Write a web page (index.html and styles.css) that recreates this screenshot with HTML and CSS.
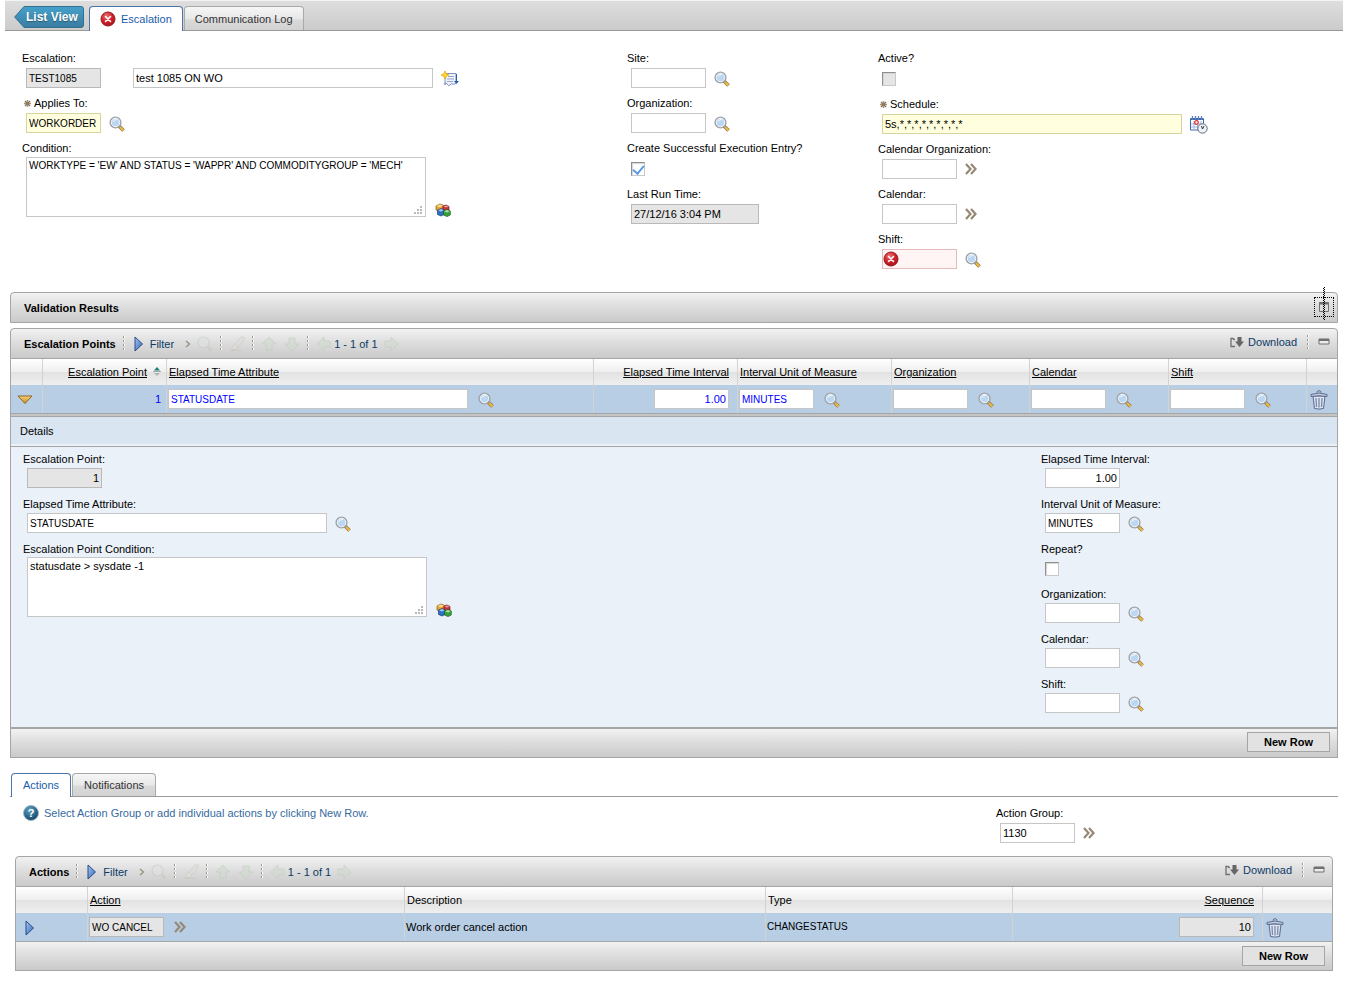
FILE: index.html
```html
<!DOCTYPE html>
<html lang="en">
<head>
    <meta charset="UTF-8">
    <meta name="viewport" content="width=device-width, initial-scale=1.0">
    <title>Escalation</title>
    <link rel="stylesheet" href="styles.css">
</head>
<body>

    <!-- shared icons -->
    <svg class="sprite" aria-hidden="true">
        <defs>
            <linearGradient id="gBlue" x1="0" y1="0" x2="1" y2="1">
                <stop offset="0" stop-color="#a9c8f2"/>
                <stop offset="1" stop-color="#2f62b5"/>
            </linearGradient>
            <linearGradient id="gGold" x1="0" y1="0" x2="0" y2="1">
                <stop offset="0" stop-color="#f6d27c"/>
                <stop offset="1" stop-color="#c8891c"/>
            </linearGradient>
            <radialGradient id="gRed" cx="0.4" cy="0.3" r="0.7">
                <stop offset="0" stop-color="#ee7474"/>
                <stop offset="0.6" stop-color="#cc2027"/>
                <stop offset="1" stop-color="#a8141b"/>
            </radialGradient>
            <radialGradient id="gHelp" cx="0.4" cy="0.3" r="0.7">
                <stop offset="0" stop-color="#5fa3c6"/>
                <stop offset="1" stop-color="#12456a"/>
            </radialGradient>
            <linearGradient id="gBack" x1="0" y1="0" x2="0" y2="1">
                <stop offset="0" stop-color="#45a2cb"/>
                <stop offset="1" stop-color="#3a7ba0"/>
            </linearGradient>
        </defs>
        <symbol id="lens" viewBox="0 0 16 16">
            <path d="M10 10l4.500 4.500" stroke="#8a7a5a" stroke-width="3.600"/>
            <path d="M11 11l3.500 3.500" stroke="#f0b93c" stroke-width="2.200"/>
            <circle cx="6.500" cy="6.500" r="5.400" fill="#bcd7f2" stroke="#a0a2a5" stroke-width="1.400"/>
            <circle cx="6.500" cy="6.500" r="4.200" fill="none" stroke="#eef3f8" stroke-width="1"/>
            <path d="M4 5.500q1-2.200 3.500-2" stroke="#fff" fill="none"/>
        </symbol>
        <symbol id="lens-off" viewBox="0 0 16 16">
            <path d="M10.500 10.500l4 4" stroke="#c9c7bb" stroke-width="2.500"/>
            <circle cx="6.500" cy="6.500" r="5.500" fill="#dfe2e2" stroke="#c6cac8" stroke-width="1.200"/>
        </symbol>
        <symbol id="eraser" viewBox="0 0 16 16">
            <path d="M1 14.500h12" stroke="#c4c4bf"/>
            <path d="M3 11l3-3 3 3-3 2.500H3z" fill="#e6dfd5" stroke="#c9c4bc"/>
            <path d="M6 8l6-7h3v3l-6 7z" fill="#deddd7" stroke="#cac9c3"/>
        </symbol>
        <symbol id="arrow" viewBox="0 0 16 16">
            <path d="M8 1l7 7h-4v6H5V8H1z" fill="#cedbcd" stroke="#c0cbc0"/>
        </symbol>
        <symbol id="error" viewBox="0 0 16 16">
            <circle cx="8" cy="8" r="7" fill="url(#gRed)" stroke="#9c1a1e"/>
            <path d="M5.500 5.500l5 5m0-5l-5 5" stroke="#fff" stroke-width="1.600" stroke-linecap="round"/>
        </symbol>
        <symbol id="chevrons" viewBox="0 0 12 12">
            <path d="M1 1l4.500 5L1 11M6 1l4.500 5L6 11" fill="none" stroke="#968877" stroke-width="2.200"/>
        </symbol>
        <symbol id="play" viewBox="0 0 10 16">
            <path d="M1 1l7.500 7L1 15z" fill="url(#gBlue)" stroke="#27498a"/>
        </symbol>
        <symbol id="dots" viewBox="0 0 2 15">
            <path d="M0 0h2v2H0zM0 4h2v2H0zM0 8h2v2H0zM0 12h2v2H0z" fill="#fff"/>
            <path d="M0 0h1v2H0zM0 4h1v2H0zM0 8h1v2H0zM0 12h1v2H0z" fill="#99988c"/>
        </symbol>
        <symbol id="cubes" viewBox="0 0 16 14">
            <path d="M1 3l4-2 3 1v5L5 8.500 1 7z" fill="#e5a32f" stroke="#8f5f14" stroke-width="0.700"/>
            <path d="M1.500 3.200L5 1.500l3 1-3 1.700z" fill="#ffdf8c"/>
            <path d="M8 3l3-1 3 1.500V8H8z" fill="#c9333c" stroke="#7c1c22" stroke-width="0.700"/>
            <path d="M8.500 3.400l2.500-1 2.500 1.100-2.500 1z" fill="#f09a9f"/>
            <path d="M2.500 7l3.500-1.500L9 7v4.500L6 13l-3.500-1.500z" fill="#2f6fc4" stroke="#173f7c" stroke-width="0.700"/>
            <path d="M3 7.200l3-1.300 2.600 1.300L6 8.500z" fill="#a6cbf5"/>
            <path d="M8.500 8l3.500-1.500L15.300 8v4L12 13.600 8.500 12z" fill="#35a03c" stroke="#1b641f" stroke-width="0.700"/>
            <path d="M9 8.200l3-1.300 2.800 1.300L12 9.600z" fill="#a9e3a6"/>
        </symbol>
        <symbol id="trash" viewBox="0 0 18 20">
            <path d="M3 6h12l-1.500 12.500q-4.500 1.200-9 0z" fill="#dbe4f0" stroke="#5c6a8c"/>
            <path d="M6 8l.5 9M9 8v9.500M12 8l-.5 9" stroke="#7d8bab" stroke-width="1.300"/>
            <path d="M1 4.500Q9 1.500 17 4.500v2q-8-1.500-16 0z" fill="#c5d1e3" stroke="#5c6a8c"/>
            <path d="M7 2.700q0-2 2-2t2 2" fill="none" stroke="#5c6a8c"/>
        </symbol>
        <symbol id="download" viewBox="0 0 14 12">
            <path d="M5 3.500H4L3 2.500H1v8h4" fill="none" stroke="#6f6f6f" stroke-width="1.300"/>
            <path d="M7.500 1h4v4.500H14L9.500 11 5 5.500h2.500z" fill="#666"/>
        </symbol>
        <symbol id="min" viewBox="0 0 12 8">
            <path d="M1 1h10v5H1z" fill="#ececec" stroke="#707070"/>
            <path d="M1 2h10" stroke="#707070" stroke-width="2"/>
        </symbol>
        <symbol id="max" viewBox="0 0 12 12">
            <path d="M1.500 1.500h9v9h-9z" fill="#ddd" stroke="#707070"/>
            <path d="M1 2.500h10" stroke="#707070" stroke-width="2"/>
        </symbol>
        <symbol id="grip" viewBox="0 0 8 8">
            <path d="M6 0h2v2H6zM3 3h2v2H3zM6 3h2v2H6zM0 6h2v2H0zM3 6h2v2H3zM6 6h2v2H6z" fill="#b9b9b9"/>
        </symbol>
        <symbol id="star" viewBox="0 0 7 7">
            <path d="M3.500 0v7M0 3.500h7" stroke="#b98d4a" stroke-width="1.400"/>
            <path d="M1 1l5 5M6 1L1 6" stroke="#7d7872" stroke-width="1.400"/>
        </symbol>
    </svg>

    <nav class="top-bar">
        <button class="back">
            <svg width="70" height="22" viewBox="0 0 70 22"><path d="M.7 11L10 .5h57q2.500 0 2.500 2.500v16q0 2.500-2.500 2.500H10z" fill="url(#gBack)" stroke="#35708f"/></svg>
            <span>List View</span>
        </button>
        <a href="#" class="tab active"><svg width="16" height="16"><use href="#error"/></svg>Escalation</a>
        <a href="#" class="tab">Communication Log</a>
    </nav>

    <form class="main-form">
        <div class="col">
            <div class="field">
                <label for="escalation">Escalation:</label>
                <div class="row">
                    <input type="text" id="escalation" class="readonly caps" value="TEST1085" readonly>
                    <input type="text" class="wide desc" aria-label="Escalation description" value="test 1085 ON WO">
                    <button type="button" class="icon" aria-label="Long description">
                        <svg width="18" height="16" viewBox="0 0 18 16">
                            <path d="M4 2.500h11V12q-1 2-3 1t-3 1-3-1-2 1z" fill="#eef2fb" stroke="#8191c0"/>
                            <path d="M7 5.500h6M6 8h7M6 10.500h6" stroke="#98a5cc"/>
                            <path d="M15.500 3v9" stroke="#2a5cab"/>
                            <path d="M13 10h5l-2.500 3z" fill="#2a5cab"/>
                            <path d="M4 0l1.300 2.700L8 4 5.300 5.300 4 8 2.700 5.300 0 4l2.700-1.300z" fill="#ffd62e" stroke="#e0a300" stroke-width="0.700"/>
                        </svg>
                    </button>
                </div>
            </div>
            <div class="field">
                <label for="applies"><svg class="star" width="7" height="7"><use href="#star"/></svg>Applies To:</label>
                <div class="row">
                    <input type="text" id="applies" class="required caps" value="WORKORDER">
                    <button type="button" class="icon" aria-label="Select value"><svg width="16" height="16"><use href="#lens"/></svg></button>
                </div>
            </div>
            <div class="field area-field">
                <label for="condition">Condition:</label>
                <div class="row">
                    <div class="area">
                        <textarea id="condition" class="caps">WORKTYPE = 'EW' AND STATUS = 'WAPPR' AND COMMODITYGROUP = 'MECH'</textarea>
                        <svg class="grip" width="8" height="8"><use href="#grip"/></svg>
                    </div>
                    <button type="button" class="icon" aria-label="Expression builder"><svg width="16" height="14"><use href="#cubes"/></svg></button>
                </div>
            </div>
        </div>

        <div class="col">
            <div class="field">
                <label for="site">Site:</label>
                <div class="row">
                    <input type="text" id="site">
                    <button type="button" class="icon" aria-label="Select value"><svg width="16" height="16"><use href="#lens"/></svg></button>
                </div>
            </div>
            <div class="field">
                <label for="org">Organization:</label>
                <div class="row">
                    <input type="text" id="org">
                    <button type="button" class="icon" aria-label="Select value"><svg width="16" height="16"><use href="#lens"/></svg></button>
                </div>
            </div>
            <div class="field check-field">
                <label for="entry">Create Successful Execution Entry?</label>
                <div class="row"><input type="checkbox" id="entry" checked></div>
            </div>
            <div class="field">
                <label for="lastrun">Last Run Time:</label>
                <div class="row"><input type="text" id="lastrun" class="readonly date" value="27/12/16 3:04 PM" readonly></div>
            </div>
        </div>

        <div class="col">
            <div class="field check-field">
                <label for="active">Active?</label>
                <div class="row"><input type="checkbox" id="active" disabled></div>
            </div>
            <div class="field">
                <label for="schedule"><svg class="star" width="7" height="7"><use href="#star"/></svg>Schedule:</label>
                <div class="row">
                    <input type="text" id="schedule" class="wide required" value="5s,*,*,*,*,*,*,*,*,*">
                    <button type="button" class="icon" aria-label="Set schedule">
                        <svg width="18" height="18" viewBox="0 0 18 18">
                            <path d="M.5 3h13v11H.5z" fill="#fff" stroke="#3f66a8"/>
                            <path d="M.5 3h13" stroke="#3f66a8" stroke-width="2"/>
                            <path d="M2.500 0v4M5.500 0v4M8.500 0v4M11.500 0v4" stroke="#5b82c4" stroke-width="1.300"/>
                            <path d="M4 5v9M7.500 5v9M11 5v9M1 8h13M1 11h13" stroke="#9db5dc"/>
                            <circle cx="6.500" cy="6.500" r="1.800" fill="#fff" stroke="#d33" stroke-width="1.300"/>
                            <circle cx="12.500" cy="12.500" r="4.700" fill="#eef3f9" stroke="#5e6b7d"/>
                            <path d="M12.500 13l-1-3M12.500 13l1.500-3" stroke="#333" fill="none"/>
                        </svg>
                    </button>
                </div>
            </div>
            <div class="field">
                <label for="calorg">Calendar Organization:</label>
                <div class="row">
                    <input type="text" id="calorg">
                    <button type="button" class="icon go" aria-label="Detail menu"><svg width="12" height="12"><use href="#chevrons"/></svg></button>
                </div>
            </div>
            <div class="field">
                <label for="cal">Calendar:</label>
                <div class="row">
                    <input type="text" id="cal">
                    <button type="button" class="icon go" aria-label="Detail menu"><svg width="12" height="12"><use href="#chevrons"/></svg></button>
                </div>
            </div>
            <div class="field">
                <label for="shift">Shift:</label>
                <div class="row">
                    <div class="error-box">
                        <input type="text" id="shift" class="invalid">
                        <svg width="16" height="16"><use href="#error"/></svg>
                    </div>
                    <button type="button" class="icon" aria-label="Select value"><svg width="16" height="16"><use href="#lens"/></svg></button>
                </div>
            </div>
        </div>
    </form>

    <section class="panel">
        <header class="toolbar">
            <h2>Validation Results</h2>
            <button class="toggle focused" aria-label="Maximize"><svg width="12" height="12"><use href="#max"/></svg></button>
        </header>
    </section>

    <section class="panel">
        <header class="toolbar">
            <h2>Escalation Points</h2>
            <div class="tools">
                <svg class="dots" width="2" height="15"><use href="#dots"/></svg>
                <button class="filter"><svg width="10" height="16"><use href="#play"/></svg>Filter</button>
                <svg class="next" width="6" height="8" viewBox="0 0 6 8"><path d="M1 1l3.500 3L1 7" fill="none" stroke="#99907f" stroke-width="1.300"/></svg>
                <svg class="off" width="16" height="16"><use href="#lens-off"/></svg>
                <svg class="dots" width="2" height="15"><use href="#dots"/></svg>
                <svg class="off" width="16" height="16"><use href="#eraser"/></svg>
                <svg class="dots" width="2" height="15"><use href="#dots"/></svg>
                <svg class="off" width="16" height="16"><use href="#arrow"/></svg>
                <svg class="off down" width="16" height="16"><use href="#arrow"/></svg>
                <svg class="dots" width="2" height="15"><use href="#dots"/></svg>
                <svg class="off left" width="16" height="16"><use href="#arrow"/></svg>
                <span class="count">1 - 1 of 1</span>
                <svg class="off right" width="16" height="16"><use href="#arrow"/></svg>
            </div>
            <div class="tools-right">
                <a href="#"><svg width="14" height="12"><use href="#download"/></svg>Download</a>
                <svg class="dots" width="2" height="15"><use href="#dots"/></svg>
                <button class="toggle" aria-label="Minimize"><svg width="12" height="8"><use href="#min"/></svg></button>
            </div>
        </header>

        <table class="points">
            <colgroup>
                <col class="c-toggle"><col class="c-point"><col><col class="c-interval"><col class="c-unit"><col class="c-org"><col class="c-cal"><col class="c-shift"><col class="c-trash">
            </colgroup>
            <thead>
                <tr>
                    <th></th>
                    <th class="num"><a href="#">Escalation Point</a><svg class="sort" width="8" height="9" viewBox="0 0 8 9"><path d="M1 3.500L4 0l3 3.500z" fill="#177f78"/><path d="M0 4.500h8" stroke="#a9a9a9"/><path d="M1 6l3 3 3-3z" fill="#b5b5b5"/></svg></th>
                    <th><a href="#">Elapsed Time Attribute</a></th>
                    <th class="num"><a href="#">Elapsed Time Interval</a></th>
                    <th><a href="#">Interval Unit of Measure</a></th>
                    <th><a href="#">Organization</a></th>
                    <th><a href="#">Calendar</a></th>
                    <th><a href="#">Shift</a></th>
                    <th></th>
                </tr>
            </thead>
            <tbody>
                <tr>
                    <td><button class="expand" aria-label="Close details"><svg width="16" height="10" viewBox="0 0 16 10"><path d="M1 1h14L8 8.500z" fill="url(#gGold)" stroke="#8f671c"/></svg></button></td>
                    <td class="num changed point">1</td>
                    <td><div class="row"><input type="text" class="wide changed caps" aria-label="Elapsed Time Attribute" value="STATUSDATE"><button class="icon" aria-label="Select value"><svg width="16" height="16"><use href="#lens"/></svg></button></div></td>
                    <td class="num"><div class="row"><input type="text" class="num changed" aria-label="Elapsed Time Interval" value="1.00"></div></td>
                    <td><div class="row"><input type="text" class="changed caps" aria-label="Interval Unit of Measure" value="MINUTES"><button class="icon" aria-label="Select value"><svg width="16" height="16"><use href="#lens"/></svg></button></div></td>
                    <td><div class="row"><input type="text" aria-label="Organization"><button class="icon" aria-label="Select value"><svg width="16" height="16"><use href="#lens"/></svg></button></div></td>
                    <td><div class="row"><input type="text" aria-label="Calendar"><button class="icon" aria-label="Select value"><svg width="16" height="16"><use href="#lens"/></svg></button></div></td>
                    <td><div class="row"><input type="text" aria-label="Shift"><button class="icon" aria-label="Select value"><svg width="16" height="16"><use href="#lens"/></svg></button></div></td>
                    <td><button class="trash" aria-label="Mark row for delete"><svg width="18" height="20"><use href="#trash"/></svg></button></td>
                </tr>
            </tbody>
        </table>

        <div class="details">
            <h3>Details</h3>
            <form class="details-form">
                <div class="col">
                    <div class="field">
                        <label for="d-point">Escalation Point:</label>
                        <div class="row"><input type="text" id="d-point" class="readonly num" value="1" readonly></div>
                    </div>
                    <div class="field">
                        <label for="d-attr">Elapsed Time Attribute:</label>
                        <div class="row">
                            <input type="text" id="d-attr" class="wide caps" value="STATUSDATE">
                            <button type="button" class="icon" aria-label="Select value"><svg width="16" height="16"><use href="#lens"/></svg></button>
                        </div>
                    </div>
                    <div class="field area-field">
                        <label for="d-cond">Escalation Point Condition:</label>
                        <div class="row">
                            <div class="area">
                                <textarea id="d-cond">statusdate &gt; sysdate -1</textarea>
                                <svg class="grip" width="8" height="8"><use href="#grip"/></svg>
                            </div>
                            <button type="button" class="icon" aria-label="Expression builder"><svg width="16" height="14"><use href="#cubes"/></svg></button>
                        </div>
                    </div>
                </div>
                <div class="col">
                    <div class="field">
                        <label for="d-int">Elapsed Time Interval:</label>
                        <div class="row"><input type="text" id="d-int" class="num" value="1.00"></div>
                    </div>
                    <div class="field">
                        <label for="d-unit">Interval Unit of Measure:</label>
                        <div class="row">
                            <input type="text" id="d-unit" class="caps" value="MINUTES">
                            <button type="button" class="icon" aria-label="Select value"><svg width="16" height="16"><use href="#lens"/></svg></button>
                        </div>
                    </div>
                    <div class="field">
                        <label for="d-repeat">Repeat?</label>
                        <div class="row"><input type="checkbox" id="d-repeat"></div>
                    </div>
                    <div class="field">
                        <label for="d-org">Organization:</label>
                        <div class="row">
                            <input type="text" id="d-org">
                            <button type="button" class="icon" aria-label="Select value"><svg width="16" height="16"><use href="#lens"/></svg></button>
                        </div>
                    </div>
                    <div class="field">
                        <label for="d-cal">Calendar:</label>
                        <div class="row">
                            <input type="text" id="d-cal">
                            <button type="button" class="icon" aria-label="Select value"><svg width="16" height="16"><use href="#lens"/></svg></button>
                        </div>
                    </div>
                    <div class="field">
                        <label for="d-shift">Shift:</label>
                        <div class="row">
                            <input type="text" id="d-shift">
                            <button type="button" class="icon" aria-label="Select value"><svg width="16" height="16"><use href="#lens"/></svg></button>
                        </div>
                    </div>
                </div>
            </form>
        </div>
        <footer><button class="new-row">New Row</button></footer>
    </section>

    <nav class="sub-tabs">
        <a href="#" class="tab active">Actions</a>
        <a href="#" class="tab">Notifications</a>
    </nav>

    <div class="hint-row">
        <p class="hint">
            <svg width="16" height="16" viewBox="0 0 16 16"><circle cx="8" cy="8" r="7.500" fill="url(#gHelp)" stroke="#9db9c8"/><text x="8" y="12" text-anchor="middle">?</text></svg>
            Select Action Group or add individual actions by clicking New Row.
        </p>
        <div class="field">
            <label for="group">Action Group:</label>
            <div class="row">
                <input type="text" id="group" value="1130">
                <button type="button" class="icon go" aria-label="Detail menu"><svg width="12" height="12"><use href="#chevrons"/></svg></button>
            </div>
        </div>
    </div>

    <section class="panel inner">
        <header class="toolbar">
            <h2>Actions</h2>
            <div class="tools">
                <svg class="dots" width="2" height="15"><use href="#dots"/></svg>
                <button class="filter"><svg width="10" height="16"><use href="#play"/></svg>Filter</button>
                <svg class="next" width="6" height="8" viewBox="0 0 6 8"><path d="M1 1l3.500 3L1 7" fill="none" stroke="#99907f" stroke-width="1.300"/></svg>
                <svg class="off" width="16" height="16"><use href="#lens-off"/></svg>
                <svg class="dots" width="2" height="15"><use href="#dots"/></svg>
                <svg class="off" width="16" height="16"><use href="#eraser"/></svg>
                <svg class="dots" width="2" height="15"><use href="#dots"/></svg>
                <svg class="off" width="16" height="16"><use href="#arrow"/></svg>
                <svg class="off down" width="16" height="16"><use href="#arrow"/></svg>
                <svg class="dots" width="2" height="15"><use href="#dots"/></svg>
                <svg class="off left" width="16" height="16"><use href="#arrow"/></svg>
                <span class="count">1 - 1 of 1</span>
                <svg class="off right" width="16" height="16"><use href="#arrow"/></svg>
            </div>
            <div class="tools-right">
                <a href="#"><svg width="14" height="12"><use href="#download"/></svg>Download</a>
                <svg class="dots" width="2" height="15"><use href="#dots"/></svg>
                <button class="toggle" aria-label="Minimize"><svg width="12" height="8"><use href="#min"/></svg></button>
            </div>
        </header>

        <table class="actions">
            <colgroup>
                <col class="a-toggle"><col class="a-action"><col><col class="a-type"><col class="a-seq"><col class="a-trash">
            </colgroup>
            <thead>
                <tr>
                    <th></th>
                    <th><a href="#">Action</a></th>
                    <th>Description</th>
                    <th>Type</th>
                    <th class="num"><a href="#">Sequence</a></th>
                    <th></th>
                </tr>
            </thead>
            <tbody>
                <tr>
                    <td><button class="expand" aria-label="View details"><svg width="10" height="16"><use href="#play"/></svg></button></td>
                    <td><div class="row"><input type="text" class="readonly caps" aria-label="Action" value="WO CANCEL" readonly><button class="icon go" aria-label="Detail menu"><svg width="12" height="12"><use href="#chevrons"/></svg></button></div></td>
                    <td>Work order cancel action</td>
                    <td class="caps">CHANGESTATUS</td>
                    <td class="num"><div class="row"><input type="text" class="readonly num" aria-label="Sequence" value="10" readonly></div></td>
                    <td><button class="trash" aria-label="Mark row for delete"><svg width="18" height="20"><use href="#trash"/></svg></button></td>
                </tr>
            </tbody>
        </table>
        <footer><button class="new-row">New Row</button></footer>
    </section>

</body>
</html>
```
FILE: styles.css
```css
* {
    box-sizing: border-box;
}

body {
    margin: 0;
    background-color: #fff;
    color: #000;
    font-family: "Liberation Sans", Arial, sans-serif;
    font-size: 11px;
    line-height: 16px;
}

svg {
    display: block;
    flex: none;
}

button, input, textarea {
    font: inherit;
    color: inherit;
    margin: 0;
}

button {
    background: none;
    border: none;
    padding: 0;
    cursor: pointer;
}

h2, h3, p {
    margin: 0;
    font-size: 11px;
}

.sprite {
    position: absolute;
    width: 0;
    height: 0;
}

/* top bar and tabs */
.top-bar {
    display: flex;
    align-items: flex-end;
    height: 31px;
    margin: 0 5px;
    padding-left: 9px;
    border-top: 1px solid #f4f4f4;
    border-bottom: 1px solid #999;
    background: linear-gradient(#dedede, #cbcbcb);
}

.back {
    position: relative;
    align-self: flex-start;
    margin: 5px 5px 0 0;
}

.back span {
    position: absolute;
    top: 3px;
    left: 12px;
    color: #fff;
    font-size: 12px;
    font-weight: bold;
    white-space: nowrap;
    text-shadow: 0 1px 1px #2b566d;
}

.tab {
    display: flex;
    align-items: center;
    gap: 5px;
    height: 24px;
    margin-right: 1px;
    padding: 0 10px;
    border: 1px solid #a9a9a9;
    border-bottom: none;
    border-radius: 4px 4px 0 0;
    background: linear-gradient(#f6f6f6 0%, #e8e8e8 50%, #dadada 55%, #d2d2d2 100%);
    color: #333;
    text-decoration: none;
}

.tab.active {
    height: 25px;
    margin-bottom: -1px;
    padding-bottom: 1px;
    border-color: #4a74ab;
    background: #fff;
    color: #1a5dab;
}

/* fields */
.main-form {
    display: grid;
    grid-template-columns: 1fr 251px 460px;
    padding: 19px 10px 16px 22px;
}

.field {
    min-height: 45px;
}

.check-field {
    min-height: 46px;
}

label {
    display: flex;
    align-items: center;
    height: 16px;
    white-space: nowrap;
}

.star {
    margin: 0 3px 0 2px;
}

.row {
    display: flex;
    align-items: center;
}

.field .row {
    margin: 2px 0 0 4px;
}

.area-field .row {
    align-items: flex-end;
    margin-top: 1px;
}

input[type="text"], textarea {
    display: block;
    border: 1px solid #c6c6c6;
    background-color: #fff;
    padding: 0 2px;
}

input[type="text"] {
    width: 75px;
    height: 20px;
}

input[type="text"].wide {
    width: 300px;
}

input[type="text"].date {
    width: 128px;
}

input[type="text"].desc {
    margin-left: 32px;
}

input[type="text"].readonly {
    background-color: #e5e5e5;
    border-color: #b9b9b9;
}

input[type="text"].required {
    background-color: #ffffdf;
    border-color: #d6d69c;
}

input[type="text"].invalid {
    background-color: #fff5f5;
    border-color: #e6b9bd;
    padding-left: 20px;
}

input.num {
    text-align: right;
}

/* upper case codes */
.caps {
    font-size: 10px;
}

.changed {
    color: #00f;
}

.error-box {
    position: relative;
}

.error-box svg {
    position: absolute;
    top: 2px;
    left: 1px;
}

.icon {
    margin: 2px 0 0 8px;
}

.icon.go {
    margin-top: 0;
}

.area {
    position: relative;
}

textarea {
    width: 400px;
    height: 60px;
    resize: none;
}

.grip {
    position: absolute;
    right: 4px;
    bottom: 3px;
}

.area-field .icon {
    margin-left: 9px;
}

input[type="checkbox"] {
    appearance: none;
    width: 14px;
    height: 14px;
    margin: 4px 0 2px;
    border: 1px solid;
    border-color: #8e8e8e #c8c8c8 #c8c8c8 #8e8e8e;
    background: #fff;
    box-shadow: inset 1px 1px 1px #d5d5d5;
}

input[type="checkbox"]:disabled {
    background: #e5e5e5;
}

input[type="checkbox"]:checked::after {
    content: "";
    display: block;
    width: 5px;
    height: 9px;
    margin: 0 0 0 3px;
    border: solid #5b9be6;
    border-width: 0 2px 2px 0;
    transform: rotate(40deg);
}

/* panels */
.panel {
    margin: 0 10px 5px;
}

.panel.inner {
    margin: 0 15px 17px;
}

.toolbar {
    display: flex;
    align-items: center;
    height: 31px;
    padding: 0 3px 0 13px;
    border: 1px solid #a5a5a5;
    border-radius: 4px 4px 0 0;
    background: linear-gradient(#f2f2f2, #dcdcdc 50%, #cacaca);
}

.toolbar h2 {
    margin-right: 7px;
    white-space: nowrap;
}

.tools, .tools-right {
    display: flex;
    align-items: center;
    color: #0b3a66;
}

.filter {
    display: flex;
    align-items: center;
    gap: 6px;
    margin: 0 11px 0 9px;
}

.next {
    margin-right: 6px;
}

.off {
    opacity: 0.6;
    margin: 0 7px 0 0;
}

.dots + .off {
    margin-left: 7px;
}

.down {
    transform: rotate(180deg);
}

.off.left {
    transform: rotate(-90deg);
    margin-right: 2px;
}

.off.right {
    transform: rotate(90deg);
    margin-left: 5px;
}

.tools-right {
    margin: 0 4px 3px auto;
}

.tools-right a {
    display: flex;
    align-items: center;
    gap: 4px;
    margin-right: 10px;
    color: inherit;
    text-decoration: none;
}

.tools-right .toggle {
    margin-left: 9px;
}

.focused {
    position: relative;
    display: flex;
    align-items: center;
    justify-content: center;
    width: 20px;
    height: 20px;
    margin: 0 0 2px auto;
    border: 1px dotted #000;
}

/* dotted insertion line over the button */
.focused::after {
    content: "";
    position: absolute;
    top: -11px;
    left: 8px;
    width: 2px;
    height: 33px;
    background: conic-gradient(#000 25%, transparent 0 50%, #000 0 75%, transparent 0) 0 0 / 2px 2px;
}

/* tables */
table {
    width: 100%;
    table-layout: fixed;
    border-collapse: separate;
    border-spacing: 0;
    border: solid #a5a5a5;
    border-width: 0 1px;
}

.c-toggle { width: 32px; }
.c-point { width: 124px; }
.c-interval { width: 144px; }
.c-unit { width: 154px; }
.c-org { width: 138px; }
.c-cal { width: 139px; }
.c-shift { width: 138px; }
.c-trash { width: 30px; }

.a-toggle { width: 72px; }
.a-action { width: 317px; }
.a-type { width: 247px; }
.a-seq { width: 250px; }
.a-trash { width: 69px; }

th, td {
    padding: 0 1px;
    border-right: 1px solid #d3d3d3;
    text-align: left;
    white-space: nowrap;
}

th:last-child, td:last-child {
    border-right: none;
}

th {
    height: 26px;
    padding-left: 2px;
    background: linear-gradient(#fff, #efefef 48%, #e2e2e2 50%, #efefef);
    font-weight: normal;
}

th a {
    color: #000;
}

td {
    height: 28px;
    background-color: #b8cee5;
}

th.num, td.num {
    padding-right: 8px;
    text-align: right;
}

td.num.point, .points th:nth-child(2) {
    padding-right: 5px;
}

td.num .row {
    justify-content: flex-end;
}

td .icon {
    margin-left: 10px;
}

.sort {
    display: inline-block;
    margin-left: 6px;
}

.expand {
    display: block;
    margin: 2px 0 0 5px;
}

.actions .expand {
    margin-left: 8px;
}

.trash {
    display: block;
    margin: 2px 0 0 2px;
}

/* details */
.details {
    border: solid #a5a5a5;
    border-width: 1px 1px 2px;
    background-color: #eaf1f8;
}

.details h3 {
    height: 30px;
    padding: 7px 9px 0;
    border-top: 2px solid #c4c4c4;
    box-shadow: inset 0 1px #a5a5a5;
    background-color: #d9e5f1;
    font-weight: normal;
    margin-bottom: 2px;
}

.details-form {
    display: grid;
    grid-template-columns: 1fr 296px;
    padding: 4px 0 6px 12px;
    border-top: 1px solid #a5a5a5;
}

.details-form .row {
    margin-top: 1px;
}

.details-form .area-field .row {
    margin-top: 0;
}

footer {
    display: flex;
    justify-content: flex-end;
    align-items: center;
    height: 29px;
    padding: 0 7px 2px 0;
    border: 1px solid #a5a5a5;
    border-top: none;
    background: linear-gradient(#f2f2f2, #dcdcdc 50%, #cacaca);
}

.inner footer {
    height: 30px;
    padding-bottom: 0;
    border-top: 1px solid #a5a5a5;
}

.new-row {
    width: 83px;
    height: 20px;
    border: 1px solid #a5a5a5;
    background-color: #e2e2e2;
    font-weight: bold;
}

/* lower tabs */
.sub-tabs {
    display: flex;
    align-items: flex-end;
    height: 24px;
    margin: 15px 10px 0;
    padding-left: 1px;
    border-bottom: 1px solid #999;
}

.sub-tabs .tab {
    height: 23px;
    padding: 0 11px 1px;
}

.sub-tabs .tab.active {
    height: 24px;
    padding-bottom: 2px;
}

.hint-row {
    display: grid;
    grid-template-columns: 1fr 352px;
    height: 59px;
    padding: 8px 0 0 23px;
}

.hint {
    display: flex;
    align-items: flex-start;
    gap: 5px;
    color: #366a9f;
}

.hint text {
    fill: #fff;
    font-size: 11px;
    font-weight: bold;
}
```
